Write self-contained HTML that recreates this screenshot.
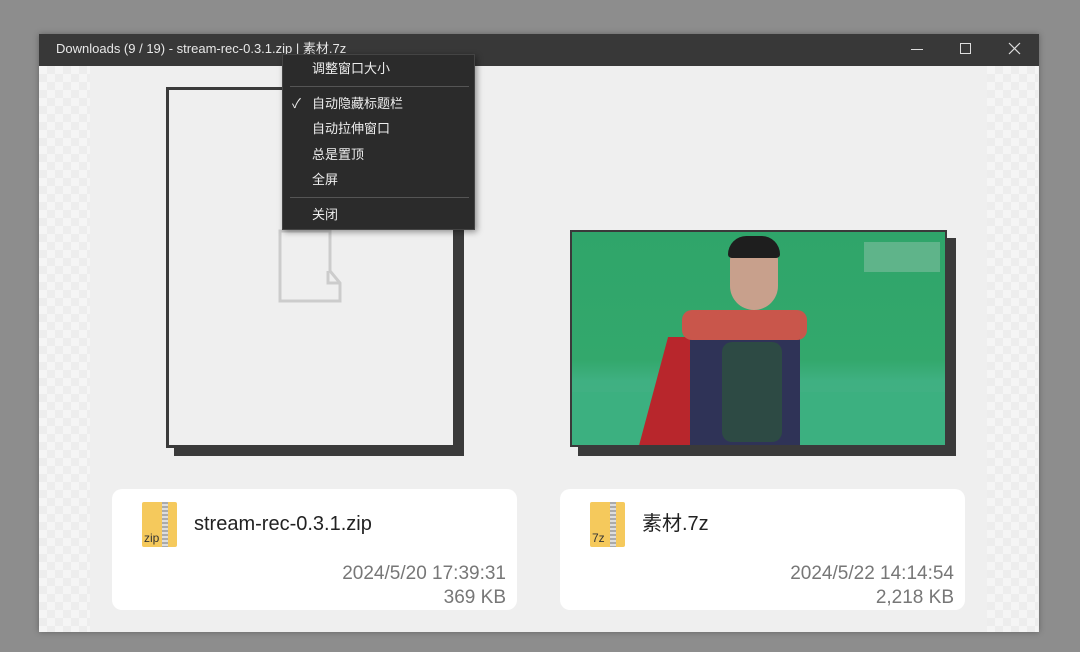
<!DOCTYPE html>
<html><head><meta charset="utf-8"><style>
*{margin:0;padding:0;box-sizing:border-box}
body{width:1080px;height:652px;background:#8d8d8d;position:relative;overflow:hidden;font-family:"Liberation Sans","Noto Sans CJK SC",sans-serif}
.win{position:absolute;left:39px;top:34px;width:1000px;height:598px;background:#efefef;box-shadow:0 0 6px rgba(0,0,0,.3)}
.title{position:absolute;left:0;top:0;width:1000px;height:32px;background:#383838;color:#e8e8e8;font-size:13px;line-height:30px;padding-left:17px}
.chk{position:absolute;top:32px;width:51px;height:566px;background-color:#f5f5f5;background-image:linear-gradient(45deg,#ededed 25%,transparent 25%,transparent 75%,#ededed 75%),linear-gradient(45deg,#ededed 25%,transparent 25%,transparent 75%,#ededed 75%);background-size:16px 16px;background-position:0 0,8px 8px}
.abs{position:absolute}
.card{position:absolute;top:489px;width:405px;height:121px;background:#fff;border-radius:10px}
.name{position:absolute;left:82px;top:22px;font-size:20px;line-height:26px;height:26px;color:#222}
.meta{position:absolute;right:11px;top:73px;text-align:right;font-size:19px;color:#777;line-height:24px}
.ico{position:absolute;left:30px;top:13px;width:35px;height:45px;background:#f5c95c;border-radius:2px}
.ico i{position:absolute;left:20px;top:0;width:6px;height:45px;background:repeating-linear-gradient(#aaa 0 2px,#ddd 2px 4px)}
.ico b{position:absolute;left:2px;bottom:2px;font-size:12px;font-weight:normal;color:#333}
.menu{position:absolute;left:282px;top:54px;width:193px;height:176px;background:#2b2b2b;border:1px solid #444;box-shadow:2px 2px 6px rgba(0,0,0,.4);color:#eee;font-size:13px;line-height:18px}
.menu div{position:absolute;left:29px}
.menu hr{position:absolute;left:7px;width:179px;border:none;border-top:1px solid #555}
</style></head><body>
<div class="win">
<div class="title">Downloads (9 / 19) - stream-rec-0.3.1.zip | 素材.7z</div>
<div class="abs" style="left:872px;top:15px;width:12px;height:1px;background:#ddd"></div>
<div class="abs" style="left:921px;top:9px;width:11px;height:11px;border:1px solid #ddd"></div>
<svg class="abs" style="left:969px;top:8px" width="13" height="13"><path d="M1 1L12 12M12 1L1 12" stroke="#ddd" stroke-width="1.2"/></svg>
<div class="chk" style="left:0"></div>
<div class="chk" style="left:948px"></div>
</div>
<div class="abs" style="left:174px;top:95px;width:290px;height:361px;background:#3a3a3a"></div>
<div class="abs" style="left:166px;top:87px;width:290px;height:361px;background:#efefef;border:3px solid #3a3a3a"></div>
<svg class="abs" style="left:278px;top:229px" width="66" height="74"><path d="M2 2H52V42L62 54V72H2Z" fill="none" stroke="#ccc" stroke-width="3"/><path d="M50 42V54H62" fill="none" stroke="#ccc" stroke-width="3"/></svg>
<div class="abs" style="left:578px;top:238px;width:378px;height:218px;background:#3a3a3a"></div>
<div class="abs" style="left:570px;top:230px;width:377px;height:217px;border:2px solid #3a3a3a;background:linear-gradient(180deg,#2fa56a 0%,#33a86c 60%,#3fb082 70%,#44b286 100%);overflow:hidden">
<div class="abs" style="left:0;top:160px;width:375px;height:60px;background:#3cb080"></div>
<div class="abs" style="left:292px;top:10px;width:76px;height:30px;background:#6cb892;opacity:.8"></div>
<div class="abs" style="left:80px;top:105px;width:60px;height:120px;background:#b8262c;transform:skewX(-15deg)"></div>
<div class="abs" style="left:118px;top:80px;width:110px;height:150px;background:#2f3357;border-radius:20px 20px 0 0"></div>
<div class="abs" style="left:110px;top:78px;width:125px;height:30px;background:#c9564b;border-radius:10px"></div>
<div class="abs" style="left:150px;top:110px;width:60px;height:100px;background:#2d4a44;border-radius:10px"></div>
<div class="abs" style="left:158px;top:8px;width:48px;height:70px;background:#c8a08c;border-radius:20px 20px 24px 24px"></div>
<div class="abs" style="left:156px;top:4px;width:52px;height:22px;background:#1e1e1e;border-radius:20px 20px 4px 4px"></div>
</div>
<div class="card" style="left:112px"><div class="ico"><i></i><b>zip</b></div><div class="name">stream-rec-0.3.1.zip</div><div class="meta">2024/5/20 17:39:31<br>369 KB</div></div>
<div class="card" style="left:560px"><div class="ico"><i></i><b>7z</b></div><div class="name">素材.7z</div><div class="meta">2024/5/22 14:14:54<br>2,218 KB</div></div>
<div class="menu">
<div style="top:5px">调整窗口大小</div>
<hr style="top:31px">
<div style="top:40px;left:9px">✓</div>
<div style="top:40px">自动隐藏标题栏</div>
<div style="top:65px">自动拉伸窗口</div>
<div style="top:91px">总是置顶</div>
<div style="top:116px">全屏</div>
<hr style="top:142px">
<div style="top:151px">关闭</div>
</div>
</body></html>
